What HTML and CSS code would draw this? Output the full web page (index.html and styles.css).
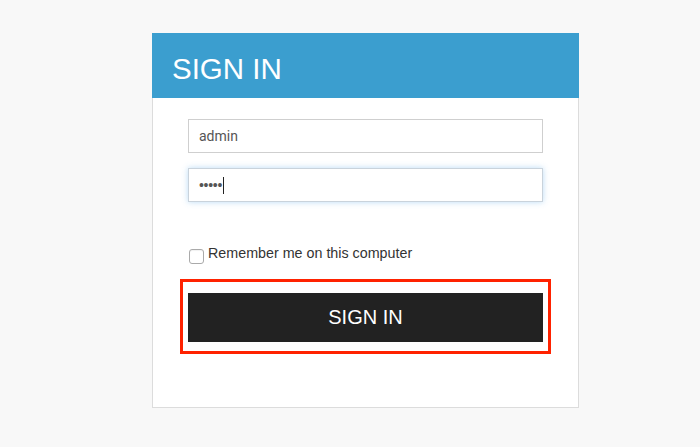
FILE: index.html
```html
<!DOCTYPE html>
<html>
<head>
<meta charset="utf-8">
<link rel="stylesheet" href="styles.css">
</head>
<body>
<div class="page">
  <div class="card">
    <div class="card-header">SIGN IN</div>
    <div class="card-body">
      <div class="field"><span class="value">admin</span></div>
      <div class="field focused"><span class="dots">•••••</span><span class="caret"></span></div>
      <label class="remember"><span class="checkbox"></span><span class="remember-text">Remember me on this computer</span></label>
      <div class="highlight">
        <div class="btn">SIGN IN</div>
      </div>
    </div>
  </div>
</div>
</body>
</html>
```

FILE: styles.css
```css
html, body {
  margin: 0;
  padding: 0;
  background: #f8f8f8;
  font-family: "Liberation Sans", Arial, sans-serif;
}
.page {
  padding: 33px 0 0 152px;
}
.card {
  width: 427px;
}
.card-header {
  background: #3b9ecf;
  color: #fff;
  height: 65px;
  box-sizing: border-box;
  padding: 20px 0 0 20px;
  font-size: 29.5px;
  line-height: 32px;
}
.card-body {
  background: #fff;
  border: 1px solid #dcdcdc;
  border-top: none;
  height: 310px;
  box-sizing: border-box;
  padding: 21px 35px 0 35px;
}
.field {
  width: 355px;
  height: 34px;
  box-sizing: border-box;
  border: 1px solid #cfcfcf;
  display: flex;
  align-items: center;
  padding-left: 10px;
  font-family: Roboto, "Liberation Sans", sans-serif;
  font-size: 14px;
  color: #555;
}
.field + .field {
  margin-top: 15px;
}
.focused {
  box-shadow: 0 0 6px rgba(102, 175, 233, 0.45);
  border-color: #c9d3dc;
}
.dots {
  font-family: "Liberation Sans", Arial, sans-serif;
  font-size: 14px;
  letter-spacing: -0.3px;
  color: #555;
}
.caret {
  display: inline-block;
  width: 1px;
  height: 17px;
  background: #222;
  margin-left: 1px;
}
.remember {
  display: flex;
  align-items: flex-start;
  margin-top: 43px;
  margin-left: 1px;
  font-size: 14.3px;
  color: #333;
}
.checkbox {
  width: 13px;
  height: 13px;
  border: 1px solid #aaa;
  border-radius: 3px;
  background: #fff;
  margin-top: 4px;
  box-shadow: inset 0 1px 1px rgba(0,0,0,0.06);
}
.remember-text {
  margin-left: 4px;
  margin-top: 0;
  line-height: 16px;
}
.highlight {
  margin: 15px 0 0 -8px;
  width: 371px;
  box-sizing: border-box;
  border: 3px solid #ff2200;
  padding: 11px 5px 9px 5px;
}
.btn {
  height: 49px;
  background: #222;
  color: #fff;
  display: flex;
  align-items: center;
  justify-content: center;
  font-size: 20px;
}
```
